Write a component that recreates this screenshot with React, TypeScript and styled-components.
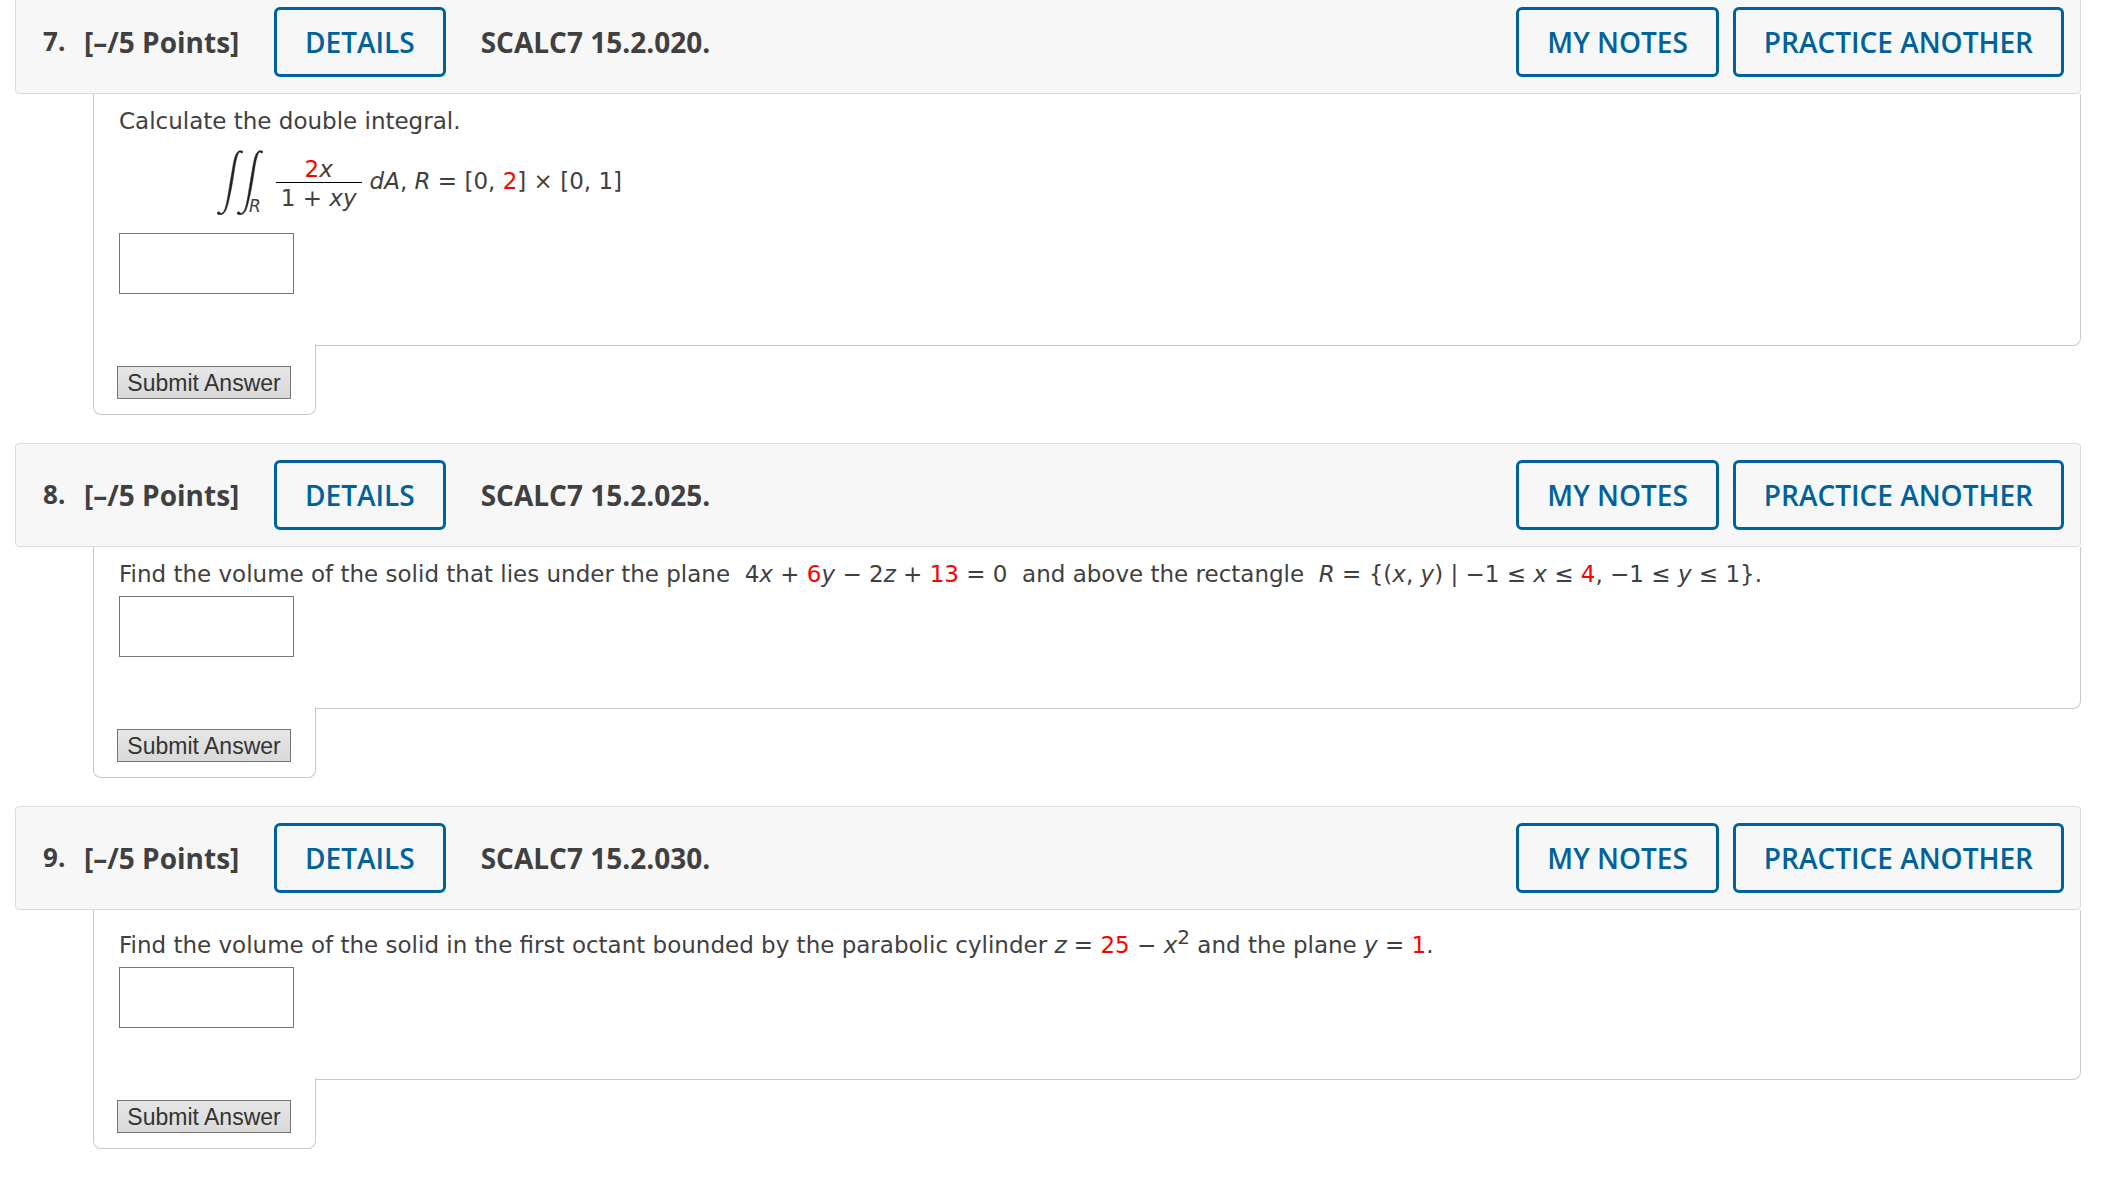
import React from 'react';
import styled, { createGlobalStyle } from 'styled-components';

const GlobalStyle = createGlobalStyle`
  *, *::before, *::after { box-sizing: border-box; }
  html { overflow: hidden; }
  body {
    margin: 0;
    background: #fff;
    color: #404040;
    font-family: Verdana, "DejaVu Sans", sans-serif;
    font-size: 23px;
    line-height: 30px;
  }
`;

const Page = styled.main`
  display: flex;
  flex-direction: column;
  gap: 28px;
  margin-top: -10px;
  padding: 0 22px 0 15px;
`;

const Question = styled.section`
  display: flex;
  flex-direction: column;
`;

const Header = styled.header`
  display: flex;
  align-items: center;
  height: 104px;
  padding: 0 16px 0 27px;
  background: #f7f7f7;
  border: 1px solid #ddd;
  border-radius: 4px;
  font-family: "Open Sans", sans-serif;
  font-size: 28px;
  font-weight: 700;
  line-height: 36px;
  white-space: nowrap;
`;

const Ordinal = styled.span`
  width: 41px;
  padding-bottom: 2px;
  font-size: 26px;
`;

const Points = styled.span`
  width: 190px;
`;

const Code = styled.h2`
  margin: 0 auto 0 35px;
  font-size: inherit;
  font-weight: inherit;
`;

const OutlineButton = styled.button`
  height: 70px;
  padding: 0 28px;
  border: 3px solid #00629b;
  border-radius: 6px;
  background: transparent;
  color: #00629b;
  font: 600 28px/36px "Open Sans", sans-serif;
`;

const Actions = styled.div`
  display: flex;
  gap: 14px;
`;

const Body = styled.div`
  display: flex;
  flex-direction: column;
  align-items: flex-start;
  margin-left: 78px;
  padding: 12px 25px 51px;
  border: 1px solid #c8c8c8;
  border-top: 0;
  border-radius: 0 0 8px 0;
`;

const Prompt = styled.label<{ $raised?: boolean }>`
  padding-top: ${(p) => (p.$raised ? 8 : 0)}px;
  margin-bottom: 7px;
`;

const Given = styled.span`
  color: #f00;
`;

const Var = styled.i``;

const Sup = styled.sup`
  font-size: 20px;
  line-height: 0;
`;

const Formula = styled.div`
  display: flex;
  align-items: center;
  margin: 7px 0 18px;
  padding-left: 98px;
`;

const IntegralMark = styled.span`
  display: flex;
  align-items: flex-end;
  margin-right: 15px;
`;

const Region = styled.i`
  margin-left: -14px;
  font-size: 17px;
  line-height: 18px;
`;

const Fraction = styled.span`
  display: flex;
  flex-direction: column;
  margin-right: 8px;
  text-align: center;
`;

const Numerator = styled.span`
  padding-top: 3px;
  border-bottom: 1px solid #000;
  line-height: 26px;
`;

const Denominator = styled.span`
  padding: 0 5px;
  line-height: 30px;
`;

const Domain = styled.span`
  padding-bottom: 4px;
`;

const AnswerInput = styled.input`
  width: 175px;
  height: 61px;
  padding: 4px 8px;
  border: 1px solid #767676;
  border-radius: 0;
  background: #fff;
  font: inherit;
  color: inherit;
`;

const SubmitTab = styled.div`
  align-self: flex-start;
  margin: -2px 0 0 78px;
  padding: 22px 24px 15px 23px;
  border: 1px solid #c8c8c8;
  border-top: 0;
  border-radius: 0 0 8px 8px;
  background: #fff;
`;

const SubmitButton = styled.button`
  display: block;
  width: 174px;
  height: 33px;
  padding: 0;
  border: 1px solid #767676;
  border-radius: 0;
  background: linear-gradient(#e6e6e6, #d9d9d9);
  color: #333;
  font: 23px/30px "Liberation Sans", Arial, sans-serif;
  white-space: nowrap;
`;

function DoubleIntegral() {
  const stroke =
    'M25.6 1.2C22 -0.6 19.2 2 17.6 8C16 14 14.6 24 13 33C11.4 43 10 52 8.4 57.4C7.2 61.6 5.6 63.6 3.6 63.2C3 62.8 2.8 62 1.8 61.8C0.4 61.6 -0.4 63.4 0.8 64.2C3.6 65.8 7.6 64.4 9.6 58.6C11.6 53 13.6 43 15.4 33C17 24 18 14 19.8 8C21 3.4 22.2 1.6 23.6 2.2C23.8 3.4 26.4 3.6 25.6 1.2Z';
  return (
    <svg width="46" height="65" viewBox="0 0 46 65" fill="#222" stroke="#222" strokeWidth="0.5" aria-hidden="true">
      <path d={stroke} />
      <path d={stroke} transform="translate(20 0)" />
    </svg>
  );
}

interface Item {
  n: number;
  code: string;
  prompt: React.ReactNode;
  raised?: boolean;
  formula?: React.ReactNode;
}

const items: Item[] = [
  {
    n: 7,
    code: 'SCALC7 15.2.020.',
    prompt: 'Calculate the double integral.',
    formula: (
      <Formula>
        <IntegralMark>
          <DoubleIntegral />
          <Region>R</Region>
        </IntegralMark>
        <Fraction>
          <Numerator><Given>2</Given><Var>x</Var></Numerator>
          <Denominator>1 + <Var>xy</Var></Denominator>
        </Fraction>
        <Domain>
          <Var>dA</Var>, <Var>R</Var> = [0, <Given>2</Given>] × [0, 1]
        </Domain>
      </Formula>
    ),
  },
  {
    n: 8,
    code: 'SCALC7 15.2.025.',
    prompt: (
      <>
        Find the volume of the solid that lies under the plane &nbsp;4<Var>x</Var> + <Given>6</Given>
        <Var>y</Var> − 2<Var>z</Var> + <Given>13</Given> = 0&nbsp; and above the rectangle &nbsp;
        <Var>R</Var> = {'{'}(<Var>x</Var>, <Var>y</Var>) | −1 ≤ <Var>x</Var> ≤ <Given>4</Given>, −1 ≤{' '}
        <Var>y</Var> ≤ 1{'}'}.
      </>
    ),
  },
  {
    n: 9,
    code: 'SCALC7 15.2.030.',
    raised: true,
    prompt: (
      <>
        Find the volume of the solid in the first octant bounded by the parabolic cylinder{' '}
        <Var>z</Var> = <Given>25</Given> − <Var>x</Var><Sup>2</Sup> and the plane <Var>y</Var> ={' '}
        <Given>1</Given>.
      </>
    ),
  },
];

export default function App() {
  return (
    <>
      <GlobalStyle />
      <Page>
        {items.map((item) => (
          <Question key={item.n}>
            <Header>
              <Ordinal>{item.n}.</Ordinal>
              <Points>[–/5 Points]</Points>
              <OutlineButton type="button">DETAILS</OutlineButton>
              <Code>{item.code}</Code>
              <Actions>
                <OutlineButton type="button">MY NOTES</OutlineButton>
                <OutlineButton type="button">PRACTICE ANOTHER</OutlineButton>
              </Actions>
            </Header>
            <Body>
              <Prompt htmlFor={`answer-${item.n}`} $raised={item.raised}>{item.prompt}</Prompt>
              {item.formula}
              <AnswerInput id={`answer-${item.n}`} type="text" />
            </Body>
            <SubmitTab>
              <SubmitButton type="submit">Submit Answer</SubmitButton>
            </SubmitTab>
          </Question>
        ))}
      </Page>
    </>
  );
}
